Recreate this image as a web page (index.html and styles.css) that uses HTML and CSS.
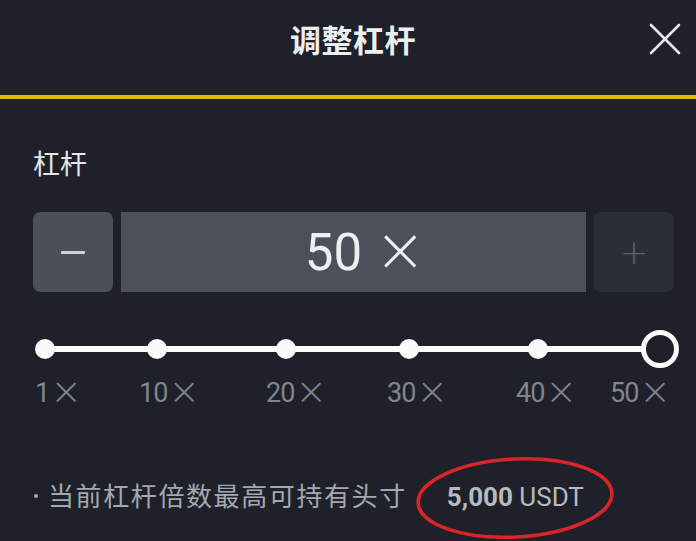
FILE: index.html
```html
<!DOCTYPE html>
<html lang="zh-CN">
<head>
<meta charset="utf-8">
<title>调整杠杆</title>
<link rel="stylesheet" href="styles.css">
</head>
<body>
<div class="sheet">
  <header class="head">
    <h1 class="title">调整杠杆</h1>
    <button class="close" aria-label="关闭">
      <svg width="32" height="32" viewBox="0 0 32 32"><path d="M2 2 L30 30 M30 2 L2 30" stroke="#e4e5e8" stroke-width="2.6" stroke-linecap="round" fill="none"/></svg>
    </button>
  </header>
  <main class="body">
    <div class="label">杠杆</div>
    <div class="stepper">
      <button class="step minus"><span class="minus-bar"></span></button>
      <div class="value">50<span class="x big">×</span></div>
      <button class="step plus"><span class="plus-glyph">+</span></button>
    </div>
    <div class="slider">
      <div class="track"></div>
      <span class="dot" style="left:12px"></span>
      <span class="dot" style="left:124px"></span>
      <span class="dot" style="left:253px"></span>
      <span class="dot" style="left:376px"></span>
      <span class="dot" style="left:505px"></span>
      <span class="knob" style="left:627px"></span>
    </div>
    <div class="ticks">
      <span class="tick" style="left:2px">1<span class="x">×</span></span>
      <span class="tick" style="left:106px">10<span class="x">×</span></span>
      <span class="tick" style="left:233px">20<span class="x">×</span></span>
      <span class="tick" style="left:354px">30<span class="x">×</span></span>
      <span class="tick" style="left:483px">40<span class="x">×</span></span>
      <span class="tick" style="left:577px">50<span class="x">×</span></span>
    </div>
    <p class="note"><span class="bullet"></span>当前杠杆倍数最高可持有头寸<span class="amount"><b>5,000</b> USDT<svg class="ring" width="204" height="88" viewBox="0 0 204 88"><ellipse cx="102" cy="44" rx="97" ry="39" fill="none" stroke="#dc2428" stroke-width="3.5"/></svg></span></p>
  </main>
</div>
</body>
</html>
```
FILE: styles.css
```css
* { box-sizing: border-box; }
html, body { margin: 0; padding: 0; }
body {
  background: #1e2129;
  font-family: "Noto Sans CJK SC", "Noto Sans", Roboto, sans-serif;
  color: #e8e9eb;
  width: 696px;
  height: 541px;
  overflow: hidden;
}
.sheet { display: flex; flex-direction: column; }
.head {
  height: 99px;
  border-bottom: 4px solid #e8b20e;
  display: flex;
  align-items: center;
  justify-content: center;
  position: relative;
  padding-bottom: 18px;
}
.title {
  margin: 0 0 0 10px;
  font-size: 31px;
  font-weight: 700;
  line-height: 40px;
  color: #eceef0;
  letter-spacing: 0.5px;
}
.close {
  position: absolute;
  right: 15px;
  top: 23px;
  width: 32px;
  height: 32px;
  padding: 0;
  border: 0;
  background: none;
  display: block;
}
.close svg { display: block; }
.body {
  padding: 0 22px 0 33px;
  display: flex;
  flex-direction: column;
}
.label {
  margin-top: 47px;
  font-size: 27px;
  line-height: 34px;
  color: #e6e7ea;
}
.stepper {
  margin-top: 32px;
  height: 80px;
  display: flex;
  gap: 8px;
}
.step {
  width: 80px;
  border: 0;
  padding: 0;
  border-radius: 7px;
  display: flex;
  align-items: center;
  justify-content: center;
}
.minus { background: #4a4f59; }
.minus-bar { width: 24px; height: 3px; background: #d0d2d6; border-radius: 1px; }
.plus { background: #2a2e37; }
.plus-glyph { font-family: "DejaVu Sans", sans-serif; font-size: 34px; font-weight: 300; color: #5b606a; line-height: 1; }
.value {
  flex: 1;
  background: #4b505b;
  display: flex;
  align-items: center;
  justify-content: center;
  font-family: Roboto, sans-serif;
  font-size: 51px;
  color: #eceef0;
  padding-left: 24px;
}
.x { font-family: "DejaVu Sans", sans-serif; font-weight: 200; }
.big { font-size: 62px; margin-left: 12px; line-height: 1; position: relative; top: -2px; }
.slider {
  position: relative;
  height: 40px;
  margin-top: 37px;
}
.track {
  position: absolute;
  left: 12px;
  right: 20px;
  top: 17px;
  height: 6px;
  background: #fbfbfc;
}
.dot {
  position: absolute;
  top: 10px;
  width: 20px;
  height: 20px;
  margin-left: -10px;
  border-radius: 50%;
  background: #fbfbfc;
}
.knob {
  position: absolute;
  top: 1px;
  width: 38px;
  height: 38px;
  margin-left: -19px;
  border-radius: 50%;
  border: 5px solid #fbfbfc;
  background: #1e2129;
}
.ticks {
  position: relative;
  height: 34px;
  margin-top: 7px;
}
.tick {
  position: absolute;
  top: 0;
  font-family: Roboto, sans-serif;
  font-size: 27px;
  line-height: 34px;
  color: #80858f;
  letter-spacing: -1px;
  white-space: nowrap;
}
.tick .x { font-size: 38px; line-height: 20px; margin-left: 1px; vertical-align: -2px; }
.note {
  margin: 68px 0 0 0;
  font-size: 26px;
  line-height: 34px;
  color: #a4a8b0;
  letter-spacing: 1.6px;
  white-space: nowrap;
}
.bullet {
  display: inline-block;
  width: 4px;
  height: 4px;
  border-radius: 50%;
  background: #a4a8b0;
  margin: 0 10px 0 1px;
  vertical-align: 8px;
}
.amount {
  position: relative;
  margin-left: 40px;
  font-family: Roboto, sans-serif;
  font-size: 26px;
  letter-spacing: 0;
  color: #b7bac0;
}
.amount b { font-weight: 700; }
.ring {
  position: absolute;
  left: 50%;
  top: 50%;
  transform: translate(-50%, -50%) rotate(-3deg);
  margin-top: 1px;
}
```
